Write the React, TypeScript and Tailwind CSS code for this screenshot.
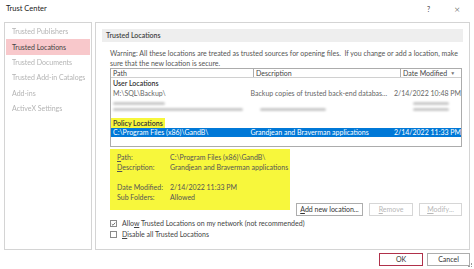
import React from 'react'

const FONT = "font-['Lato','Noto_Sans',sans-serif]"

const NAV = ['Trusted Publishers', 'Trusted Locations', 'Trusted Documents', 'Trusted Add-in Catalogs', 'Add-ins', 'ActiveX Settings']

function Btn({ children, disabled, className = '' }: { children: React.ReactNode; disabled?: boolean; className?: string }) {
  return (
    <div
      className={`flex h-[13px] items-center justify-center whitespace-nowrap border bg-white text-[7px] leading-none ${
        disabled ? 'border-[#d6d6d6] text-[#b8b8b8]' : 'border-[#adadad] text-[#333]'
      } ${className}`}
    >
      {children}
    </div>
  )
}

function Check({ checked }: { checked?: boolean }) {
  return (
    <div className="flex h-[7px] w-[7px] items-center justify-center border border-[#8a8a8a] bg-white">
      {checked ? (
        <svg viewBox="0 0 8 8" className="h-[6px] w-[6px]">
          <path d="M1.2 4.2 L3.2 6 L6.8 1.8" fill="none" stroke="#333" strokeWidth="1.1" />
        </svg>
      ) : null}
    </div>
  )
}

function Blur({ w }: { w: number }) {
  return <div className="h-[3px] rounded-full bg-[#c9c9c9] blur-[1.2px]" style={{ width: w }} />
}

export default function App() {
  return (
    <div className={`relative h-[269px] w-[474px] overflow-hidden whitespace-nowrap bg-white text-[#3b3b3b] ${FONT}`}>
      {/* title bar */}
      <div className="flex h-[22px] items-center px-[6px] text-[7.5px] text-[#222]">
        <span className="-mt-[4px]">Trust Center</span>
        <div className="-mt-[4px] ml-auto flex items-center gap-[24px] pr-[8px] text-[#444]">
          <span className="text-[7px]">?</span>
          <span className="text-[10px] font-light leading-none">×</span>
        </div>
      </div>

      <div className="flex h-[228px] gap-[3px] px-[4px]">
        {/* nav */}
        <div className="w-[88px] shrink-0 border border-[#d4d4d4] p-[1px]">
          {NAV.map((n) => (
            <div
              key={n}
              className={`flex h-[15.3px] items-center pl-[6px] text-[7px] ${
                n === 'Trusted Locations' ? 'bg-[#f8c8cb] text-[#444]' : 'text-[#b4b4b4] blur-[0.3px]'
              }`}
            >
              {n}
            </div>
          ))}
        </div>

        {/* content */}
        <div className="flex min-w-0 flex-1 flex-col border border-[#d4d4d4] px-[6px] pt-[6px]">
          <div className="flex h-[13px] items-center bg-[#eeeeee] pl-[4px] text-[7px] font-semibold text-[#444]">
            Trusted Locations
          </div>

          <div className="ml-[8px] mr-[1px] flex flex-col">
            <p className="mt-[6px] whitespace-normal text-[7px] leading-[10px] text-[#555]">
              Warning: All these locations are treated as trusted sources for opening files.&nbsp; If you change or add a location, make sure that the new location is secure.
            </p>

            {/* table */}
            <div className="flex h-[79px] flex-col border border-[#acacac] text-[7px] leading-none">
              <div className="flex h-[9px] border-b border-[#d0d0d0] text-[#444]">
                <div className="flex w-[143px] items-center border-r border-[#acacac] pl-[2px]">Path</div>
                <div className="flex w-[147px] items-center border-r border-[#acacac] pl-[2px]">Description</div>
                <div className="flex flex-1 items-center pl-[2px]">
                  Date Modified
                  <span className="ml-[3px] text-[5px] text-[#777]">▼</span>
                </div>
              </div>
              <div className="flex h-[10px] items-center pl-[2px] font-semibold text-[#333]">User Locations</div>
              <div className="flex h-[10px] items-center text-[#666]">
                <div className="w-[143px] pl-[2px]">M:\SQL\Backup\</div>
                <div className="w-[147px] pl-[1px]">Backup copies of trusted back-end databas...</div>
                <div className="flex-1 pl-[2px]">2/14/2022 10:48 PM</div>
              </div>
              <div className="flex h-[10px] items-center">
                <div className="w-[143px] pl-[2px]">
                  <Blur w={52} />
                </div>
                <div className="w-[147px]" />
                <div className="flex-1 pl-[12px]">
                  <Blur w={36} />
                </div>
              </div>
              <div className="flex h-[10px] items-start">
                <div className="w-[143px] pl-[2px]">
                  <Blur w={130} />
                </div>
                <div className="w-[147px] pl-[6px]">
                  <Blur w={66} />
                </div>
                <div className="flex-1 pl-[12px]">
                  <Blur w={36} />
                </div>
              </div>
              <div className="flex h-[10px] items-end">
                <span className="bg-[#f7f73c] px-[2px] pb-[1px] pt-[2px] font-semibold text-[#333]">Policy Locations</span>
              </div>
              <div className="flex h-[9px] items-center bg-[#0078d7] text-white">
                <div className="w-[143px] pl-[2px]">C:\Program Files (x86)\GandB\</div>
                <div className="w-[147px] pl-[1px]">Grandjean and Braverman applications</div>
                <div className="flex-1 pl-[2px]">2/14/2022 11:33 PM</div>
              </div>
            </div>

            {/* details + buttons */}
            <div className="mt-[2px] flex items-start">
              <div className="h-[61px] w-[180px] shrink-0 bg-[#f7f73c] pl-[7px] pt-[3px] text-[7px] leading-[10px] text-[#555]">
                <div className="flex">
                  <span className="w-[53px]"><u>P</u>ath:</span>
                  <span>C:\Program Files (x86)\GandB\</span>
                </div>
                <div className="flex">
                  <span className="w-[53px]"><u>D</u>escription:</span>
                  <span>Grandjean and Braverman applications</span>
                </div>
                <div className="h-[10px]" />
                <div className="flex">
                  <span className="w-[53px]">Date Modified:</span>
                  <span>2/14/2022 11:33 PM</span>
                </div>
                <div className="flex">
                  <span className="w-[53px]">Sub Folders:</span>
                  <span>Allowed</span>
                </div>
              </div>
              <div className="ml-auto mt-[54px] flex gap-[6px]">
                <Btn className="w-[67px]">
                  <span><u>A</u>dd new location...</span>
                </Btn>
                <Btn disabled className="w-[44px]">
                  <span><u>R</u>emove</span>
                </Btn>
                <Btn disabled className="w-[43px]">
                  <span><u>M</u>odify...</span>
                </Btn>
              </div>
            </div>

            <div className="mt-[4px] flex flex-col gap-[4px] text-[7px] leading-none text-[#444]">
              <div className="flex items-center gap-[5px]">
                <Check checked />
                <span>Allo<u>w</u> Trusted Locations on my network (not recommended)</span>
              </div>
              <div className="flex items-center gap-[5px]">
                <Check />
                <span><u>D</u>isable all Trusted Locations</span>
              </div>
            </div>
          </div>
        </div>
      </div>

      {/* footer */}
      <div className="flex justify-end gap-[4px] pr-[4px] pt-[3px]">
        <Btn className="w-[44px] border-[#b0304a]">OK</Btn>
        <Btn className="w-[43px]">Cancel</Btn>
      </div>
      <div className="absolute bottom-[2px] right-[2px] h-[4px] w-[4px] border-b border-r border-dotted border-[#999]" />
    </div>
  )
}
